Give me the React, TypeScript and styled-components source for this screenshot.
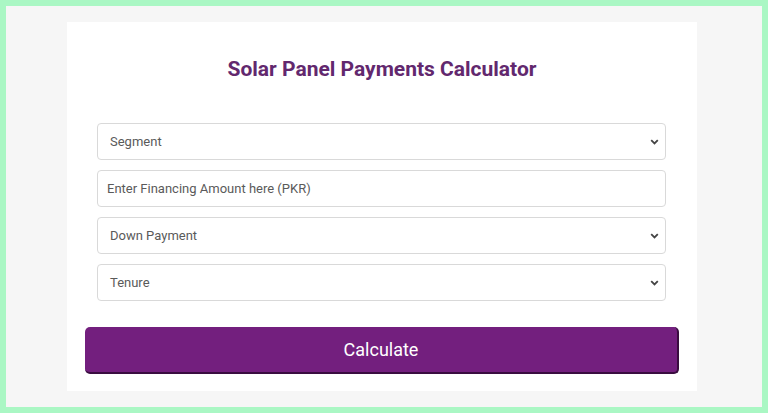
import React from "react";
import styled, { createGlobalStyle } from "styled-components";

const Global = createGlobalStyle`
  html, body { margin: 0; padding: 0; }
  body { font-family: Roboto, "Liberation Sans", Arial, sans-serif; background: #f6f6f6; }
  * { box-sizing: border-box; }
`;

const Frame = styled.div`
  width: 768px;
  height: 413px;
  border: 6px solid #aaf7c4;
  background: #f6f6f6;
  padding: 16px 0 0 61px;
`;

const Card = styled.div`
  width: 630px;
  height: 369px;
  background: #ffffff;
  display: flex;
  flex-direction: column;
  padding-top: 34px;
`;

const Title = styled.h1`
  margin: 0;
  text-align: center;
  font-family: Roboto, "Liberation Sans", Arial, sans-serif;
  font-weight: 700;
  font-size: 21px;
  line-height: 26px;
  color: #62286e;
`;

const Fields = styled.div`
  display: flex;
  flex-direction: column;
  gap: 10px;
  margin: 41px 31px 0 30px;
`;

const Field = styled.div<{ $select?: boolean }>`
  position: relative;
  height: 37px;
  border: 1px solid #d9d9d9;
  border-radius: 4px;
  background: #fff;
  display: flex;
  align-items: center;
  padding-left: ${(p) => (p.$select ? "12px" : "9px")};
  font-size: 13px;
  color: #5a5a5a;
`;

const Chevron = styled.svg`
  position: absolute;
  right: 6px;
  top: 50%;
  margin-top: -4px;
  width: 9px;
  height: 8px;
`;

const Button = styled.button`
  margin: 26px 18px 0 18px;
  height: 47px;
  border: none;
  border-right: 2px solid #3a0d40;
  border-bottom: 2px solid #3a0d40;
  border-radius: 5px;
  background: #731f7e;
  color: #fff;
  font-family: Roboto, "Liberation Sans", Arial, sans-serif;
  font-size: 18px;
  padding: 0;
`;

const Select = ({ label }: { label: string }) => (
  <Field $select>
    {label}
    <Chevron viewBox="0 0 9 8">
      <path d="M1.2 2.2 L4.5 5.5 L7.8 2.2" fill="none" stroke="#444" strokeWidth="1.8" />
    </Chevron>
  </Field>
);

export default function App() {
  return (
    <>
      <Global />
      <Frame>
        <Card>
          <Title>Solar Panel Payments Calculator</Title>
          <Fields>
            <Select label="Segment" />
            <Field>Enter Financing Amount here (PKR)</Field>
            <Select label="Down Payment" />
            <Select label="Tenure" />
          </Fields>
          <Button>Calculate</Button>
        </Card>
      </Frame>
    </>
  );
}
